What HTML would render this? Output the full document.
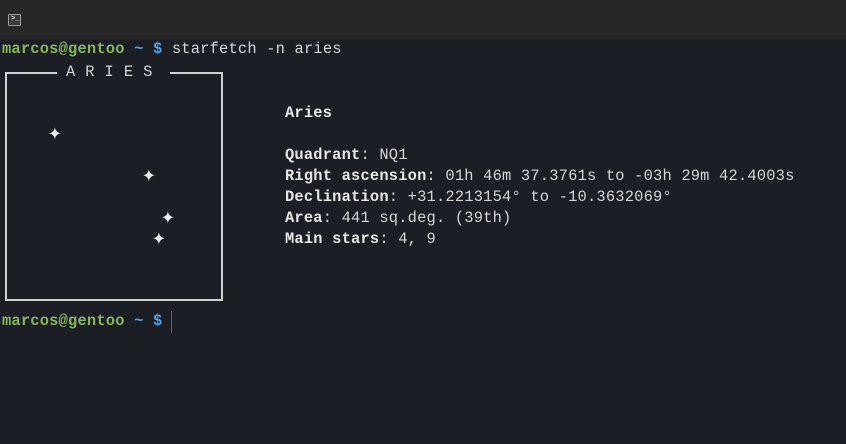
<!DOCTYPE html>
<html><head><style>
body{margin:0;width:846px;height:444px;background:#1c1e26;overflow:hidden;font-family:"Liberation Mono",monospace;font-size:15.4px;letter-spacing:0.2px;color:#d6d6d6;position:relative}
.bar{position:absolute;left:0;top:0;width:846px;height:39px;background:#272727}
.ic{position:absolute;left:8px;top:14px;width:13px;height:12px;background:#9a9a9a;border-radius:1px}
.ic:after{content:"";position:absolute;left:1px;top:1px;width:11px;height:10px;background:#3a3a3a}
.t{position:absolute;white-space:pre;line-height:21px}
.g{color:#86b85a;font-weight:bold}.b{color:#4ea4ea;font-weight:bold}
b{font-weight:bold;color:#e8e8e8}
.box{position:absolute;left:5px;top:72px;width:214px;height:225px;border:2px solid #d0d0d0}
.gap{position:absolute;left:57px;top:70px;width:113px;height:6px;background:#1c1e26}
.star{position:absolute;color:#eee;font-family:"DejaVu Sans",sans-serif;font-size:17px;line-height:17px;transform:translate(-50%,-50%)}
</style></head><body>
<div class="bar"><div class="ic"></div><div style="position:absolute;left:11px;top:16px;color:#ddd;font-size:7px;line-height:7px;font-weight:bold">&gt;_</div></div>
<div class="t" style="left:2px;top:39px"><span class="g">marcos@gentoo</span> <span class="b">~ $</span> starfetch -n aries</div>
<div class="box"></div><div class="gap"></div>
<div class="t" style="left:66px;top:62px;letter-spacing:0.4px">A R I E S</div>
<div class="star" style="left:55px;top:135px">✦</div>
<div class="star" style="left:149px;top:177px">✦</div>
<div class="star" style="left:168px;top:219px">✦</div>
<div class="star" style="left:159px;top:240px">✦</div>
<div class="t" style="left:285px;top:103px"><b>Aries</b>

<b>Quadrant</b>: NQ1
<b>Right ascension</b>: 01h 46m 37.3761s to -03h 29m 42.4003s
<b>Declination</b>: +31.2213154° to -10.3632069°
<b>Area</b>: 441 sq.deg. (39th)
<b>Main stars</b>: 4, 9</div>
<div class="t" style="left:2px;top:311px"><span class="g">marcos@gentoo</span> <span class="b">~ $</span></div>
<div style="position:absolute;left:171px;top:311px;width:1px;height:22px;background:#666"></div>
</body></html>
